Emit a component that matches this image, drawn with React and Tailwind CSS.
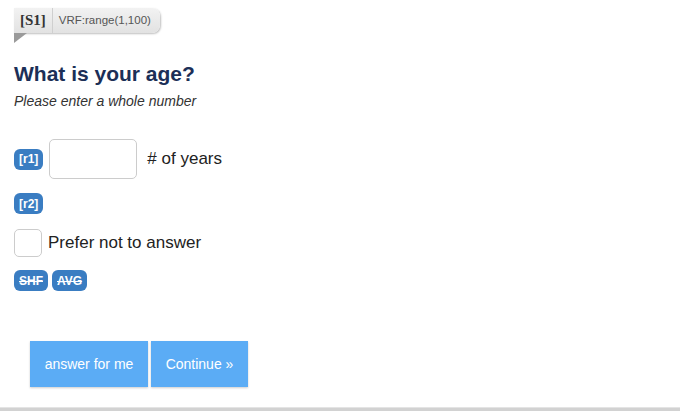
import React from "react";

const Badge = ({ children, strike }) => (
  <span
    className={
      "inline-flex items-center justify-center h-[21px] px-[5px] rounded-[6px] bg-[#3a7dc2] text-white text-[12px] font-bold leading-none " +
      (strike ? "line-through" : "")
    }
  >
    {children}
  </span>
);

export default function App() {
  return (
    <div
      className="relative w-[680px] h-[411px] bg-white overflow-hidden"
      style={{ fontFamily: '"Liberation Sans", Arial, sans-serif' }}
    >
      <div className="flex flex-col pl-[14px] pt-[8px]">
        {/* Tag */}
        <div className="relative self-start">
          <div className="flex items-center h-[25px] w-[146px] rounded-tr-[8px] rounded-br-[8px] bg-gradient-to-b from-[#f2f2f2] to-[#e2e2e2] shadow-[1px_1px_2px_rgba(0,0,0,0.25)]">
            <span
              className="px-[6px] text-[15px] font-bold text-[#333]"
              style={{ fontFamily: '"Liberation Serif", serif' }}
            >
              [S1]
            </span>
            <span className="h-full w-px bg-[#cfcfcf]" />
            <span className="pl-[6px] text-[11.5px] text-[#555]">VRF:range(1,100)</span>
          </div>
          <div className="w-0 h-0 border-t-[10px] border-t-[#9a9a9a] border-r-[13px] border-r-transparent" />
        </div>

        {/* Question */}
        <h1 className="mt-[18px] text-[21px] font-bold text-[#1c2f57] leading-[26px]">
          What is your age?
        </h1>
        <p className="mt-[5px] text-[14px] italic text-[#333] leading-[18px]">
          Please enter a whole number
        </p>

        <div className="mt-[29px] flex items-center gap-[6px]">
          <Badge>[r1]</Badge>
          <div className="w-[88px] h-[40px] border border-[#ccc] rounded-[5px]" />
          <span className="ml-[4px] text-[17px] text-[#222]">
            # of years
          </span>
        </div>

        <div className="mt-[14px] flex">
          <Badge>[r2]</Badge>
        </div>

        <div className="mt-[15px] flex items-center gap-[6px]">
          <div className="w-[28px] h-[28px] border border-[#ccc] rounded-[5px]" />
          <span className="text-[17px] text-[#222]">Prefer not to answer</span>
        </div>

        <div className="mt-[13px] flex gap-[4px]">
          <Badge strike>SHF</Badge>
          <Badge strike>AVG</Badge>
        </div>

        <div className="mt-[50px] ml-[16px] flex gap-[3px]">
          <button className="w-[118px] h-[46px] bg-[#5bacf5] text-white text-[14px] shadow-[0_1px_2px_rgba(0,0,0,0.2)]">
            answer for me
          </button>
          <button className="w-[97px] h-[46px] bg-[#5bacf5] text-white text-[14px] shadow-[0_1px_2px_rgba(0,0,0,0.2)]">
            Continue »
          </button>
        </div>
      </div>

      <div className="absolute left-0 right-0 bottom-0 h-[4px] bg-[#d2d2d2] border-t border-[#e4e4e4]" />
    </div>
  );
}
